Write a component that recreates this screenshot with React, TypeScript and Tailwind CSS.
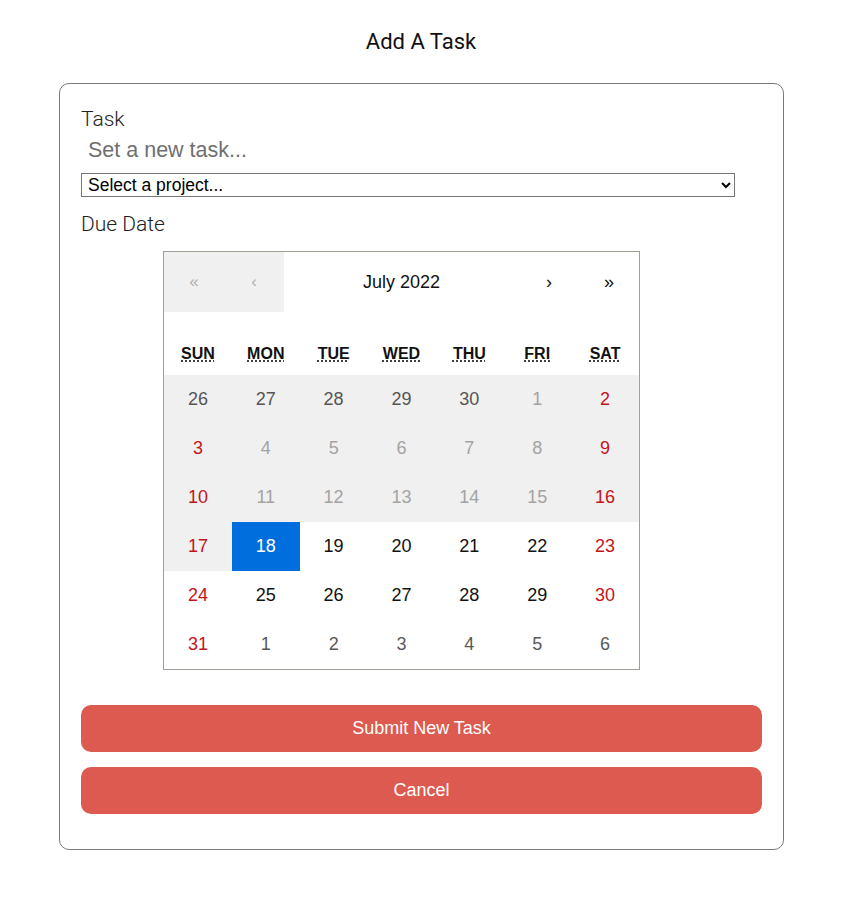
import { useState } from "react";

type Tile = {
  day: number;
  tone: "prev" | "disabled" | "weekend" | "normal" | "next" | "selected";
  shaded: boolean;
};

const weekdays = ["SUN", "MON", "TUE", "WED", "THU", "FRI", "SAT"];

// July 2022, dates before the 18th are disabled
const buildTiles = (): Tile[] => {
  const tiles: Tile[] = [];
  [26, 27, 28, 29, 30].forEach((d) => tiles.push({ day: d, tone: "prev", shaded: true }));
  for (let d = 1; d <= 31; d++) {
    const col = tiles.length % 7;
    const weekend = col === 0 || col === 6;
    let tone: Tile["tone"] = "normal";
    if (d === 18) tone = "selected";
    else if (weekend) tone = "weekend";
    else if (d < 18) tone = "disabled";
    tiles.push({ day: d, tone, shaded: d < 18 });
  }
  [1, 2, 3, 4, 5, 6].forEach((d) => tiles.push({ day: d, tone: "next", shaded: false }));
  return tiles;
};

const toneClass = (tile: Tile) => {
  const tones = {
    prev: "text-[#555555]",
    disabled: "text-[#a3a3a3]",
    weekend: "text-[#c4141a]",
    normal: "text-[#111111]",
    next: "text-[#595959]",
    selected: "text-white bg-[#006edc]",
  };
  return tones[tile.tone];
};

const Calendar = () => {
  const tiles = buildTiles();
  return (
    <div className="w-[477px] border border-[#a0a096] bg-white font-['Liberation_Sans',Arial,sans-serif]">
      {/* Navigation */}
      <div className="flex h-[60px]">
        <button className="w-[60px] bg-[#f0f0f0] text-[17px] text-[#b0b0b0]" disabled>
          «
        </button>
        <button className="w-[60px] bg-[#f0f0f0] text-[17px] text-[#b0b0b0]" disabled>
          ‹
        </button>
        <button className="flex-1 text-[18px] text-[#111]">July 2022</button>
        <button className="w-[60px] text-[18px] text-[#111]">›</button>
        <button className="w-[60px] text-[18px] text-[#111]">»</button>
      </div>

      {/* Weekdays */}
      <div className="grid grid-cols-7 h-[63px] items-end pb-[12px]">
        {weekdays.map((w) => (
          <div key={w} className="text-center text-[16px] leading-[18px] font-bold text-[#111]">
            <abbr className="underline decoration-dotted underline-offset-2">{w}</abbr>
          </div>
        ))}
      </div>

      {/* Days */}
      <div className="grid grid-cols-7">
        {tiles.map((tile, i) => (
          <button
            key={i}
            className={`h-[49px] text-[18px] ${tile.shaded && tile.tone !== "selected" ? "bg-[#f0f0f0]" : ""} ${toneClass(tile)}`}
          >
            {tile.day}
          </button>
        ))}
      </div>
    </div>
  );
};

export default function App() {
  const [task, setTask] = useState("");
  const [project, setProject] = useState("");

  return (
    <div className="w-[842px] bg-white pb-[55px] font-['Roboto',sans-serif]">
      <h1 className="pt-[29px] text-center text-[22px] leading-[26px] text-[#111]">Add A Task</h1>

      <div className="mt-[28px] ml-[59px] w-[725px] rounded-[10px] border border-[#7a7a7a] px-[21px] pt-[22px] pb-[35px]">
        <label className="block text-[21px] leading-[26px] font-light text-[#222]">Task</label>
        <input
          value={task}
          onChange={(e) => setTask(e.target.value)}
          placeholder="Set a new task..."
          className="mt-[4px] block h-[28px] w-[400px] px-[7px] font-['Liberation_Sans',Arial,sans-serif] text-[21.5px] outline-none placeholder:text-[#6f6f6f]"
        />
        <select
          value={project}
          onChange={(e) => setProject(e.target.value)}
          className="mt-[9px] block h-[24px] w-[654px] border border-[#767676] pl-[2px] pr-[4px] font-['Liberation_Sans',Arial,sans-serif] text-[17.5px] leading-[20px] text-black"
        >
          <option value="">Select a project...</option>
          <option value="home">Home</option>
          <option value="work">Work</option>
        </select>
        <label className="mt-[14px] block text-[21px] leading-[26px] font-light text-[#222]">Due Date</label>

        <div className="mt-[14px] ml-[82px]">
          <Calendar />
        </div>

        <button className="mt-[35px] block h-[47px] w-full rounded-[10px] bg-[#dc5a50] font-['Liberation_Sans',Arial,sans-serif] text-[18px] text-white">
          Submit New Task
        </button>
        <button className="mt-[15px] block h-[47px] w-full rounded-[10px] bg-[#dc5a50] font-['Liberation_Sans',Arial,sans-serif] text-[18px] text-white">
          Cancel
        </button>
      </div>
    </div>
  );
}
